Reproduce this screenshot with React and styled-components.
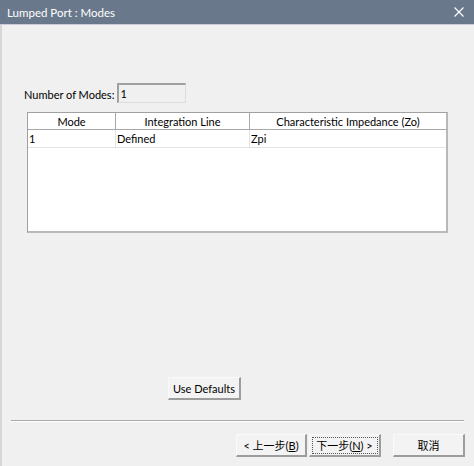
import React, { useState } from 'react';
import styled, { createGlobalStyle } from 'styled-components';

const GlobalStyle = createGlobalStyle`
  html, body {
    margin: 0;
    padding: 0;
    background: #ffffff;
  }
  body {
    font-family: Lato, 'Noto Sans CJK SC', sans-serif;
    font-size: 11px;
    color: #000;
  }
`;

const Window = styled.div`
  width: 474px;
  height: 466px;
  display: flex;
  flex-direction: column;
  background: #f0f0f0;
  box-sizing: border-box;
  border-left: 2px solid #d6d6d6;
`;

const TitleBar = styled.div`
  height: 24px;
  margin-left: -2px;
  background: #6a788c;
  color: #ffffff;
  display: flex;
  align-items: center;
  justify-content: space-between;
  padding: 0 10px 0 7px;
  font-size: 11.5px;
  border-bottom: 1px solid #c9ced6;
`;

const CloseIcon = styled.svg`
  width: 10px;
  height: 10px;
`;

const Body = styled.div`
  flex: 1;
  display: flex;
  flex-direction: column;
  padding: 58px 0 0 0;
`;

const FieldRow = styled.div`
  display: flex;
  align-items: center;
  padding-left: 22px;
  gap: 3px;
`;

const Label = styled.label`
  font-size: 11px;
  padding-top: 2px;
`;

const Input = styled.input`
  width: 69px;
  height: 20px;
  box-sizing: border-box;
  border: 1px solid #dcdcdc;
  border-top: 2px solid #a0a0a0;
  border-left: 2px solid #a0a0a0;
  background: #f0f0f0;
  font-family: inherit;
  font-size: 11px;
  padding: 0 1px;
  outline: none;
`;

const Grid = styled.div`
  margin: 9px 0 0 25px;
  width: 421px;
  height: 121px;
  box-sizing: border-box;
  background: #ffffff;
  border: 1px solid #a0a0a0;
  border-right: 2px solid #b8b8b8;
  border-bottom: 2px solid #b8b8b8;
`;

const Row = styled.div`
  display: grid;
  grid-template-columns: 88px 134px 1fr;
  height: ${(p) => (p.$head ? 16 : 17)}px;
  border-bottom: 1px solid ${(p) => (p.$head ? '#a8a8a8' : '#e3e3e3')};
`;

const Cell = styled.div`
  display: flex;
  align-items: center;
  justify-content: ${(p) => (p.$head ? 'center' : 'flex-start')};
  padding-left: ${(p) => (p.$head ? '0' : '1px')};
  border-right: 1px solid ${(p) => (p.$head ? '#a8a8a8' : '#e3e3e3')};
  font-size: 11px;
  white-space: nowrap;
  &:last-child {
    border-right: none;
  }
`;

const Spacer = styled.div`
  flex: 1;
`;

const DefaultsRow = styled.div`
  display: flex;
  padding-left: 166px;
  margin-bottom: 20px;
`;

const Button = styled.button`
  height: 23px;
  width: ${(p) => p.$w || 72}px;
  box-sizing: border-box;
  padding: 0;
  background: #f3f3f3;
  border: 1px solid #fafafa;
  border-right: 2px solid #9c9c9c;
  border-bottom: 2px solid #9c9c9c;
  font-family: Lato, 'Noto Sans CJK SC', sans-serif;
  font-size: 11px;
  color: #000;
  cursor: pointer;
  margin-left: ${(p) => p.$gap || 0}px;
  outline: ${(p) => (p.$focus ? '1px dotted #555' : 'none')};
  outline-offset: -4px;
`;

const Separator = styled.div`
  height: 1px;
  margin: 0 10px 0 9px;
  background: #a9a9a9;
  border-bottom: 1px solid #ffffff;
`;

const Footer = styled.div`
  display: flex;
  justify-content: flex-end;
  padding: 12px 9px 9px 0;
  gap: 2px;
`;

const Key = styled.span`
  text-decoration: underline;
`;

export default function App() {
  const [modes, setModes] = useState('1');
  const rows = [['1', 'Defined', 'Zpi']];
  return (
    <>
      <GlobalStyle />
      <Window>
        <TitleBar>
          <span>Lumped Port : Modes</span>
          <CloseIcon viewBox="0 0 10 10">
            <path d="M0.5 0.5 L9.5 9.5 M9.5 0.5 L0.5 9.5" stroke="#ffffff" strokeWidth="1.1" fill="none" />
          </CloseIcon>
        </TitleBar>
        <Body>
          <FieldRow>
            <Label htmlFor="modes">Number of Modes:</Label>
            <Input id="modes" value={modes} onChange={(e) => setModes(e.target.value)} />
          </FieldRow>
          <Grid>
            <Row $head>
              <Cell $head>Mode</Cell>
              <Cell $head>Integration Line</Cell>
              <Cell $head>Characteristic Impedance (Zo)</Cell>
            </Row>
            {rows.map((r, i) => (
              <Row key={i}>
                {r.map((c, j) => (
                  <Cell key={j}>{c}</Cell>
                ))}
              </Row>
            ))}
          </Grid>
          <Spacer />
          <DefaultsRow>
            <Button $w={73}>Use Defaults</Button>
          </DefaultsRow>
          <Separator />
          <Footer>
            <Button $w={71}>&lt; 上一步(<Key>B</Key>)</Button>
            <Button $w={72} $focus>下一步(<Key>N</Key>) &gt;</Button>
            <Button $w={72} $gap={10}>取消</Button>
          </Footer>
        </Body>
      </Window>
    </>
  );
}
